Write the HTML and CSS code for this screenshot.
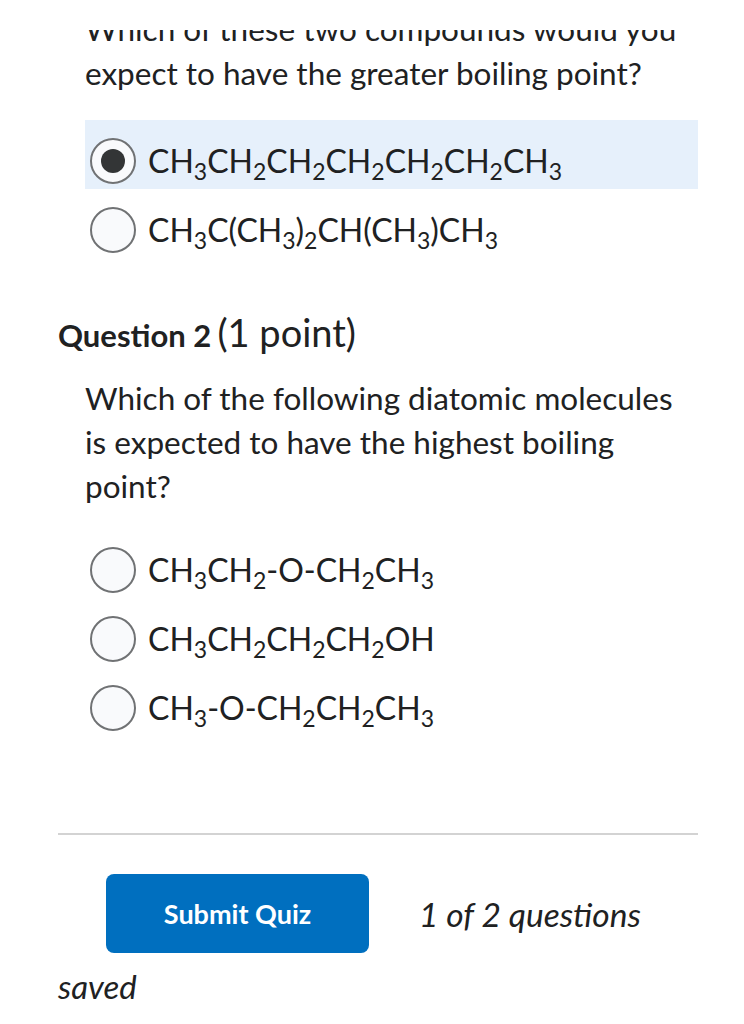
FILE: index.html
```html
<!DOCTYPE html>
<html lang="en">
<head>
<meta charset="utf-8">
<link rel="stylesheet" href="styles.css">
<title>Quiz</title>
</head>
<body>
<div class="topmask"></div>
<main class="page">
  <p class="qtext first">Which of these two compounds would you expect to have the greater boiling point?</p>
  <ul class="options q1opts">
    <li class="opt selected"><span class="radio"><span class="dot"></span></span><span class="label">CH<sub>3</sub>CH<sub>2</sub>CH<sub>2</sub>CH<sub>2</sub>CH<sub>2</sub>CH<sub>2</sub>CH<sub>3</sub></span></li>
    <li class="opt"><span class="radio"></span><span class="label">CH<sub>3</sub>C(CH<sub>3</sub>)<sub>2</sub>CH(CH<sub>3</sub>)CH<sub>3</sub></span></li>
  </ul>
  <h2 class="qhead"><span class="qnum">Question 2</span> <span class="qpts">(1 point)</span></h2>
  <p class="qtext">Which of the following diatomic molecules is expected to have the highest boiling point?</p>
  <ul class="options q2opts">
    <li class="opt"><span class="radio"></span><span class="label">CH<sub>3</sub>CH<sub>2</sub>-O-CH<sub>2</sub>CH<sub>3</sub></span></li>
    <li class="opt"><span class="radio"></span><span class="label">CH<sub>3</sub>CH<sub>2</sub>CH<sub>2</sub>CH<sub>2</sub>OH</span></li>
    <li class="opt"><span class="radio"></span><span class="label">CH<sub>3</sub>-O-CH<sub>2</sub>CH<sub>2</sub>CH<sub>3</sub></span></li>
  </ul>
  <hr class="divider">
  <div class="footer">
    <button class="submit" type="button">Submit Quiz</button>
    <span class="progress">1 of 2 questions</span>
  </div>
  <p class="saved">saved</p>
</main>
</body>
</html>
```

FILE: styles.css
```css
* { box-sizing: border-box; }
html, body { margin: 0; padding: 0; background: #ffffff; }
body {
  font-family: Lato, "Noto Sans", sans-serif;
  color: #202122;
  width: 744px;
  height: 1024px;
  overflow: hidden;
  position: relative;
}
.topmask {
  position: absolute;
  top: 0; left: 0; right: 0;
  height: 30px;
  background: #ffffff;
  z-index: 2;
}
.page {
  padding: 0 46px 0 58px;
}
.qtext {
  margin: 0 0 0 27px;
  font-size: 31.5px;
  line-height: 44px;
}
.qtext.first {
  padding-top: 7px;
}
.options {
  list-style: none;
  margin: 0 0 0 27px;
  padding: 0;
}
.q1opts { margin-top: 25px; }
.q2opts { margin-top: 21px; }
.opt {
  display: flex;
  align-items: center;
  gap: 12px;
  height: 69px;
  padding: 18px 0 5px 5px;
  font-size: 32px;
}
.opt.selected { background: #e6f0fb; }
.radio {
  flex: none;
  width: 46px;
  height: 46px;
  border: 2px solid #707274;
  border-radius: 50%;
  background: #f9fafc;
  display: flex;
  align-items: center;
  justify-content: center;
}
.dot {
  width: 24px;
  height: 24px;
  border-radius: 50%;
  background: #333536;
}
.label { line-height: 1; }
sub {
  font-size: 23px;
  vertical-align: -7px;
  line-height: 0;
}
.qhead {
  margin: 52px 0 0 0;
  font-weight: 400;
  line-height: 44px;
}
.qnum { font-weight: 700; font-size: 31px; }
.qpts { font-size: 38px; }
.qhead + .qtext { margin-top: 16px; }
.divider {
  margin: 97px 0 0 0;
  border: 0;
  height: 2px;
  background: #d3d3d3;
}
.footer {
  display: flex;
  align-items: center;
  margin-top: 39px;
  padding-left: 48px;
  gap: 50px;
}
.submit {
  width: 263px;
  height: 79px;
  border: 0;
  border-radius: 8px;
  background: #006fbf;
  color: #ffffff;
  font-family: Lato, "Noto Sans", sans-serif;
  font-weight: 700;
  font-size: 27px;
}
.progress {
  font-style: italic;
  font-size: 33.5px;
}
.saved {
  margin: 11px 0 0 0;
  font-style: italic;
  font-size: 33px;
  line-height: 44px;
}
```
